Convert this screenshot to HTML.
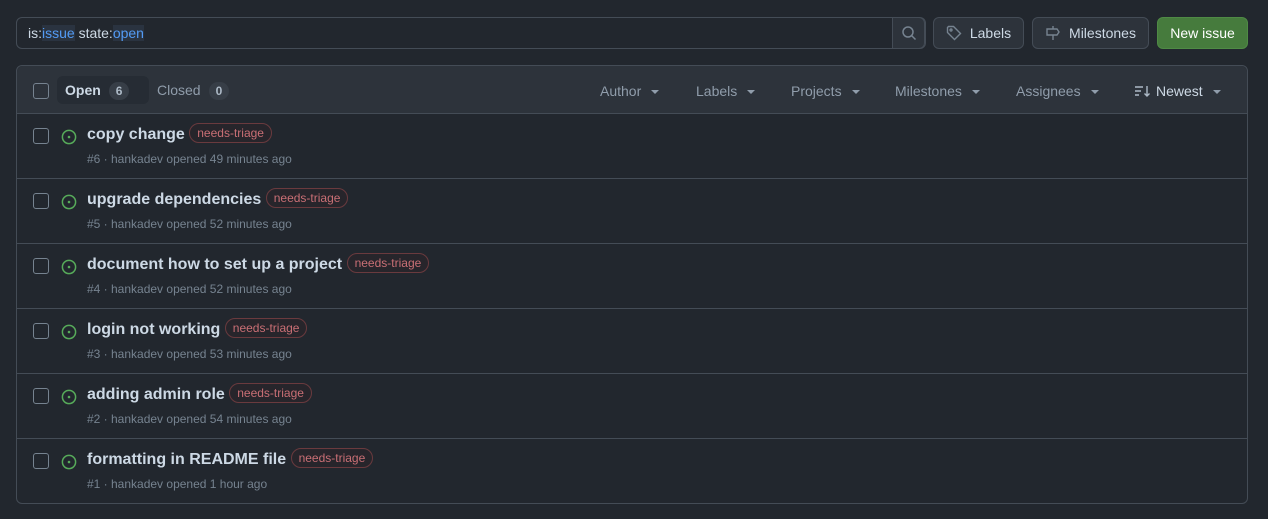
<!DOCTYPE html>
<html><head><style>
*{box-sizing:border-box;margin:0;padding:0}
body{width:1268px;height:519px;background:#22272e;font-family:"Liberation Sans",sans-serif;color:#adbac7;position:relative;overflow:hidden}
.abs{position:absolute}
.search{left:16px;top:17px;width:910px;height:32px;border:1px solid #444c56;border-radius:6px;background:#22272e}
.search .t{position:absolute;left:11px;top:7px;font-size:14px;color:#cdd9e5}
.search .t span{color:#539bf5;background:#2a3340}
.sbtn{position:absolute;right:0;top:-1px;width:33px;height:32px;border:1px solid #444c56;border-radius:0 6px 6px 0;background:#2d333b}
.btn{top:17px;height:32px;border:1px solid #444c56;border-radius:6px;background:#2d333b;font-size:14px;color:#cdd9e5;display:flex;align-items:center;justify-content:center;gap:8px}
.green{background:#467b3d;border-color:#4f8a45;color:#fff}
.box{left:16px;top:65px;width:1232px;height:439px;border:1px solid #444c56;border-radius:6px}
.hdr{height:48px;background:#2d333b;border-bottom:1px solid #444c56;border-radius:6px 6px 0 0;position:relative}
.cb{position:absolute;width:16px;height:16px;border:1px solid #768390;border-radius:3px;left:16px}
.cnt{display:inline-block;background:#373e47;border-radius:10px;padding:2px 7px;font-size:12px;font-weight:bold;color:#adbac7;margin-left:8px;line-height:14px}
.f{position:absolute;top:17px;font-size:14px;color:#909dab}
.f:after{content:"";display:inline-block;margin-left:10px;border:4px solid transparent;border-top-color:#909dab;vertical-align:middle;margin-top:3px}
.row{height:65px;border-bottom:1px solid #444c56;position:relative}
.row:last-child{border-bottom:none}
.row .cb{top:14px}
.ic{position:absolute;left:44px;top:15px}
.ti{position:absolute;left:70px;top:9px;font-size:16px;font-weight:bold;color:#cdd9e5;white-space:nowrap}
.lb{display:inline-block;font-size:12px;font-weight:normal;border:1px solid #6a3a3e;border-radius:10px;padding:2px 7px;line-height:14px;vertical-align:2px;color:#c96f75;background:#27252b}
.me{position:absolute;left:70px;top:38px;font-size:12px;color:#768390}
</style></head><body>
<div class="abs search"><div class="t">is:<span>issue</span> state:<span>open</span></div>
<div class="sbtn"><svg width="16" height="16" viewBox="0 0 16 16" style="position:absolute;left:8px;top:7px" fill="none" stroke="#768390" stroke-width="1.5"><circle cx="7" cy="7" r="5"/><path d="M10.5 10.5l4 4"/></svg></div></div>
<div class="abs btn" style="left:933px;width:91px"><svg width="16" height="16" viewBox="0 0 16 16" fill="none" stroke="#768390" stroke-width="1.4"><path d="M1.5 2.5v5l7 7 6-6-7-7h-5z"/><circle cx="5" cy="5" r="1"/></svg>Labels</div>
<div class="abs btn" style="left:1032px;width:117px"><svg width="16" height="16" viewBox="0 0 16 16" fill="none" stroke="#768390" stroke-width="1.4"><path d="M8 1v3M8 10v5M2 4h10l2 3-2 3H2z"/></svg>Milestones</div>
<div class="abs btn green" style="left:1157px;width:91px">New issue</div>
<div class="abs box">
<div class="hdr">
<div class="cb" style="top:17px"></div>
<div style="position:absolute;left:40px;top:10px;width:92px;height:28px;background:#262c34;border-radius:6px"></div>
<div style="position:absolute;left:48px;top:16px;font-size:14px;font-weight:bold;color:#cdd9e5">Open<span class="cnt">6</span></div>
<div style="position:absolute;left:140px;top:16px;font-size:14px;color:#909dab">Closed<span class="cnt">0</span></div>
<div class="f" style="left:583px">Author</div>
<div class="f" style="left:679px">Labels</div>
<div class="f" style="left:774px">Projects</div>
<div class="f" style="left:878px">Milestones</div>
<div class="f" style="left:999px">Assignees</div>
<div class="f" style="left:1117px;color:#cdd9e5"><svg width="18" height="14" viewBox="0 0 18 14" fill="none" stroke="#adbac7" stroke-width="1.4" style="vertical-align:-2px;margin-right:4px"><path d="M1 3h8M1 7h6M1 11h4M13 2v10M10.5 9.5l2.5 2.5 2.5-2.5"/></svg>Newest</div>
</div>
<div class="row"><div class="cb"></div><svg class="ic" width="16" height="16" viewBox="0 0 16 16"><circle cx="8" cy="8" r="6.6" fill="none" stroke="#57ab5a" stroke-width="1.5"/><circle cx="8" cy="8" r="1.3" fill="#57ab5a"/></svg><div class="ti">copy change <span class="lb">needs-triage</span></div><div class="me">#6 · hankadev opened 49 minutes ago</div></div>
<div class="row"><div class="cb"></div><svg class="ic" width="16" height="16" viewBox="0 0 16 16"><circle cx="8" cy="8" r="6.6" fill="none" stroke="#57ab5a" stroke-width="1.5"/><circle cx="8" cy="8" r="1.3" fill="#57ab5a"/></svg><div class="ti">upgrade dependencies <span class="lb">needs-triage</span></div><div class="me">#5 · hankadev opened 52 minutes ago</div></div>
<div class="row"><div class="cb"></div><svg class="ic" width="16" height="16" viewBox="0 0 16 16"><circle cx="8" cy="8" r="6.6" fill="none" stroke="#57ab5a" stroke-width="1.5"/><circle cx="8" cy="8" r="1.3" fill="#57ab5a"/></svg><div class="ti">document how to set up a project <span class="lb">needs-triage</span></div><div class="me">#4 · hankadev opened 52 minutes ago</div></div>
<div class="row"><div class="cb"></div><svg class="ic" width="16" height="16" viewBox="0 0 16 16"><circle cx="8" cy="8" r="6.6" fill="none" stroke="#57ab5a" stroke-width="1.5"/><circle cx="8" cy="8" r="1.3" fill="#57ab5a"/></svg><div class="ti">login not working <span class="lb">needs-triage</span></div><div class="me">#3 · hankadev opened 53 minutes ago</div></div>
<div class="row"><div class="cb"></div><svg class="ic" width="16" height="16" viewBox="0 0 16 16"><circle cx="8" cy="8" r="6.6" fill="none" stroke="#57ab5a" stroke-width="1.5"/><circle cx="8" cy="8" r="1.3" fill="#57ab5a"/></svg><div class="ti">adding admin role <span class="lb">needs-triage</span></div><div class="me">#2 · hankadev opened 54 minutes ago</div></div>
<div class="row"><div class="cb"></div><svg class="ic" width="16" height="16" viewBox="0 0 16 16"><circle cx="8" cy="8" r="6.6" fill="none" stroke="#57ab5a" stroke-width="1.5"/><circle cx="8" cy="8" r="1.3" fill="#57ab5a"/></svg><div class="ti">formatting in README file <span class="lb">needs-triage</span></div><div class="me">#1 · hankadev opened 1 hour ago</div></div>
</div>
</body></html>
